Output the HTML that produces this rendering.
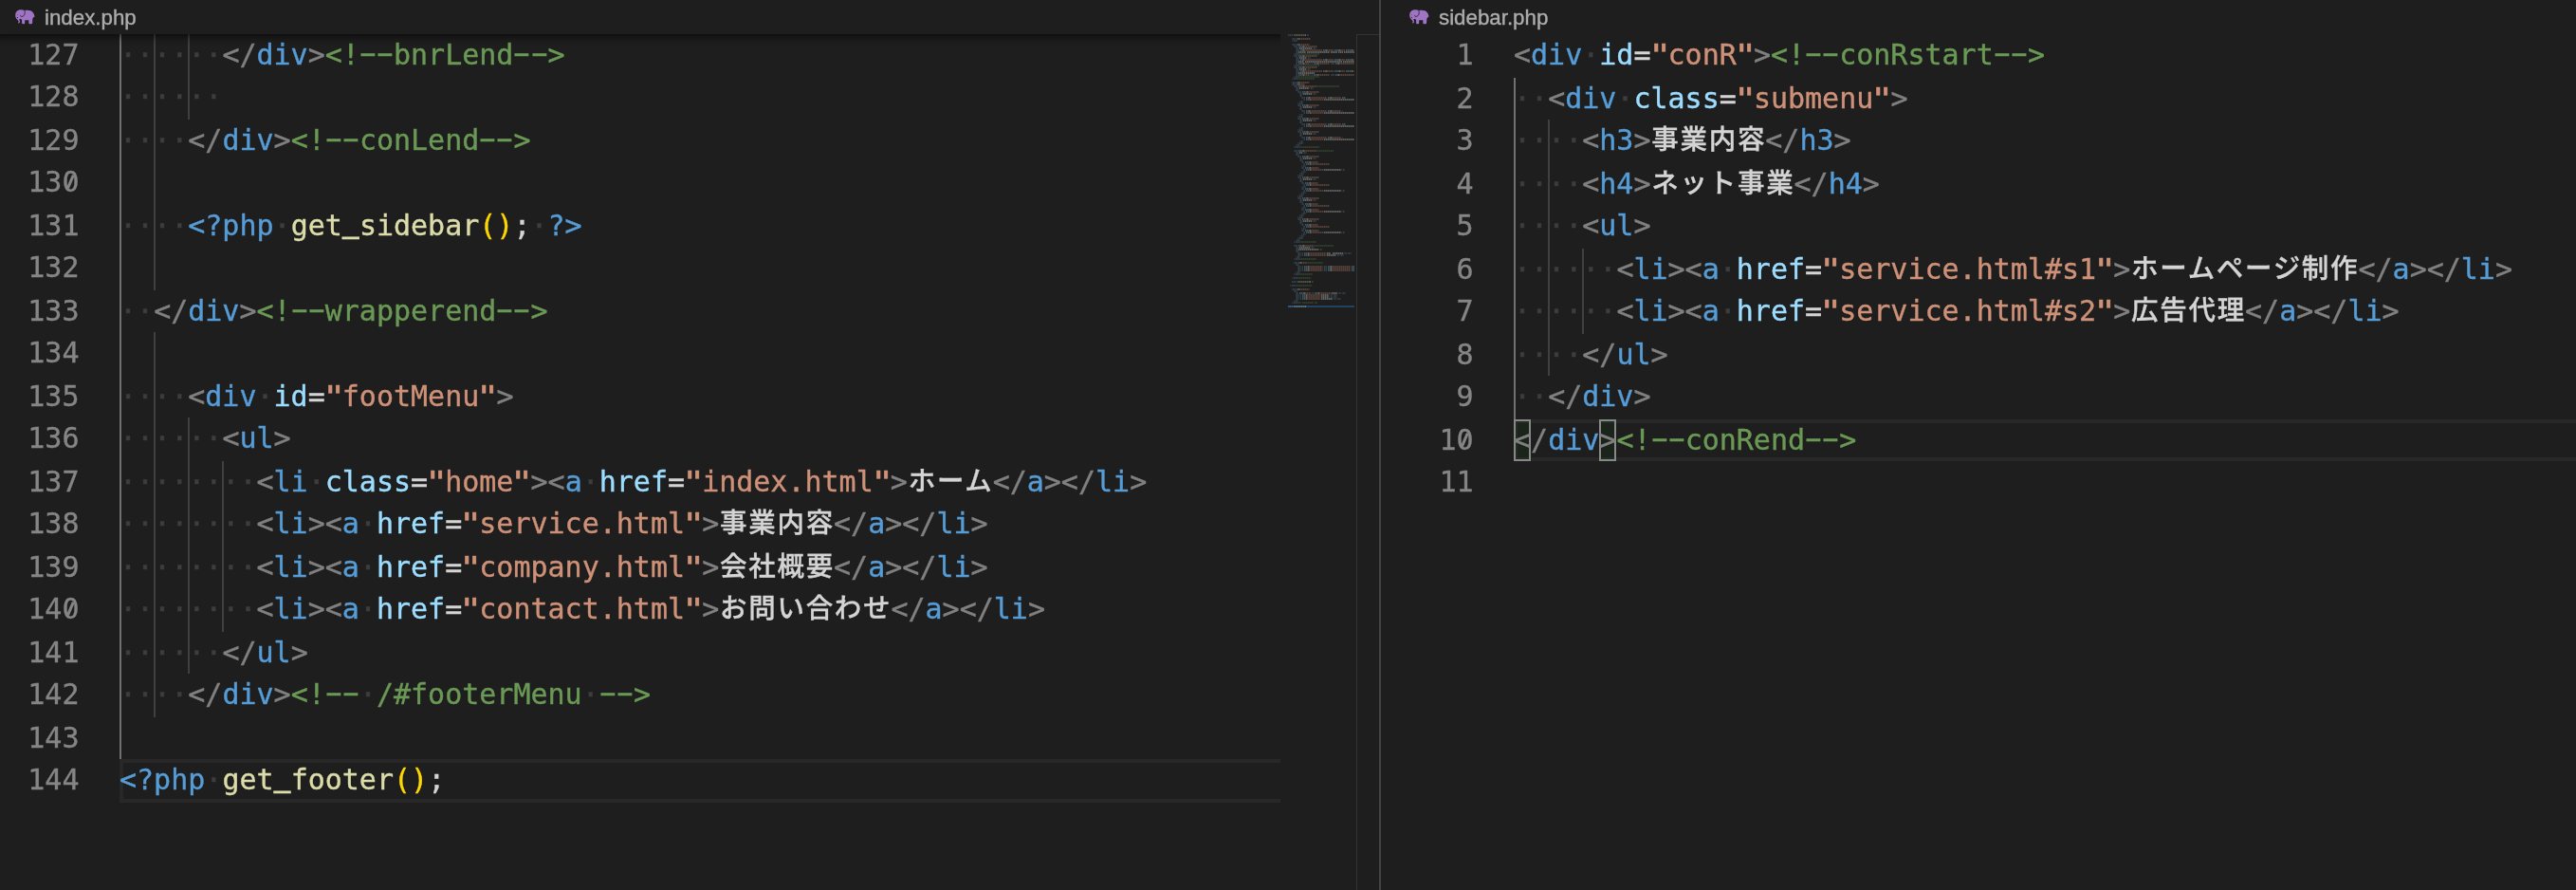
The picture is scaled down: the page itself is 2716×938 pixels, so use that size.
<!DOCTYPE html>
<html lang="ja">
<head>
<meta charset="utf-8">
<title>index.php — sidebar.php</title>
<style>
html,body{margin:0;padding:0;background:#1e1e1e;}
body{width:2716px;height:938px;position:relative;overflow:hidden;font-family:"DejaVu Sans Mono","Liberation Mono","Noto Sans CJK JP",monospace;}
.tab{position:absolute;top:0;height:36px;line-height:38px;font-family:"Liberation Sans","Noto Sans CJK JP",sans-serif;font-size:22.3px;color:#adadad;-webkit-text-stroke:.38px;white-space:pre;}
.tab svg{position:absolute;top:10px;left:0;}
.shadow{position:absolute;left:0;top:36px;width:1350px;height:12px;box-shadow:#000 0 12px 12px -12px inset}
.ln{position:absolute;width:80px;height:45px;line-height:45px;font-size:30px;color:#858585;text-align:right;white-space:pre;}
.cl{position:absolute;height:45px;line-height:45px;font-size:30px;color:#d4d4d4;white-space:pre;}
.cl span{display:inline-block;height:45px;vertical-align:top;}
.cl i{display:inline-block;font-style:normal;transform:translateY(-1.5px) scale(1.85,1.08);}
.cl span.w{-webkit-text-stroke:.6px;color:#3d3d3d}
.cl b{display:inline-block;font-weight:inherit;transform:scaleX(1.4)}
.cl u{display:inline-block;text-decoration:none;transform:scaleY(1.75);transform-origin:50% 100%}
.ln,.cl{-webkit-text-stroke:.38px;margin-top:-1px}
#all{position:absolute;left:0;top:0;width:2716px;height:938px;will-change:transform}
.w{color:#404040}.b{color:#808080}.t{color:#569cd6}.a{color:#9cdcfe}.s{color:#ce9178}.c{color:#6a9955}.d{color:#d4d4d4}.f{color:#dcdcaa}.y{color:#ffd700}
.cl span.j{color:#d4d4d4;font-family:"Noto Sans CJK JP",sans-serif;font-size:28.5px;letter-spacing:1.7px;font-weight:500;position:relative;left:.85px;top:-3px;-webkit-text-stroke:.3px}
.z{position:relative;display:inline-block}
.z::before{content:"";position:absolute;left:50%;top:50%;width:7px;height:8px;margin:-4.500px 0 0 -3.500px;background:#1e1e1e;border-radius:50%}
.z::after{content:"";position:absolute;left:50%;top:50%;width:3px;height:14.500px;margin:-7.750px 0 0 -1.500px;background:#858585;transform:rotate(23deg)}
.ig{position:absolute;width:2px;background:#404040}
.ig.act{background:#707070}
.cur{position:absolute;height:37px;border:4px solid #282828;border-right:0}
.bm{position:absolute;width:14px;height:41px;border:2px solid #888;background:rgba(0,100,0,.1)}
.vline{position:absolute;top:0;width:2px;}
</style>
</head>
<body>
<div id="all">
<div class="vline" style="left:1454px;height:938px;background:#444"></div>
<div class="vline" style="left:1430px;top:36px;height:902px;background:#333;width:1px"></div>
<div style="position:absolute;left:1430px;top:36px;width:24px;height:1px;background:#333"></div>
<div class="tab" style="left:16px;padding-left:31px"><svg width="22" height="16" viewBox="0 0 22 16"><path fill="#a074c4" d="M6.100,0.200C3,0.100 0.200,2.200 0.200,6C0.200,8 0.800,9.200 2,10.600C2.800,11.500 3.800,12 3.600,12.800C3.500,13.300 2.900,13.500 3.200,14.200C3.600,14.800 4.600,14.500 4.900,13.600C5.200,12.500 4.600,11.500 4.400,10.300L5.200,9.800C6,10.200 6.800,10.500 7.100,11L7.100,14.300C7.100,15.200 7.600,15.200 8.600,15.200C9.700,15.200 10.200,15.200 10.200,14.300L10.200,11.200L14.300,11.200L14.300,14.300C14.300,15.200 14.800,15.200 16.200,15.200C17.600,15.200 18.100,15.200 18.100,14.300L18.300,10C18.600,9 19.500,8.300 20.200,7.600L20.900,7.400L20.300,6.800C20,4.500 18.500,2.200 16.500,1.300C14.500,0.500 12,0.600 10.300,0.900C9,0.500 7.500,0.200 6.100,0.200Z"/><path fill="none" stroke="#1e1e1e" stroke-opacity=".9" stroke-width=".85" stroke-linecap="round" d="M9.900,1C10.300,2.500 10.400,4 10,5C9.500,6.500 8.300,7.400 7,7.500C6.200,7.500 5.700,7 5.600,6.300"/><circle cx="2.500" cy="5.500" r=".4" fill="#1e1e1e" fill-opacity=".7"/><circle cx="2.500" cy="8.500" r=".55" fill="#1e1e1e"/></svg>index.php</div>
<div class="tab" style="left:1486px;padding-left:31px"><svg width="22" height="16" viewBox="0 0 22 16"><path fill="#a074c4" d="M6.100,0.200C3,0.100 0.200,2.200 0.200,6C0.200,8 0.800,9.200 2,10.600C2.800,11.500 3.800,12 3.600,12.800C3.500,13.300 2.900,13.500 3.200,14.200C3.600,14.800 4.600,14.500 4.900,13.600C5.200,12.500 4.600,11.500 4.400,10.300L5.200,9.800C6,10.200 6.800,10.500 7.100,11L7.100,14.300C7.100,15.200 7.600,15.200 8.600,15.200C9.700,15.200 10.200,15.200 10.200,14.300L10.200,11.200L14.300,11.200L14.300,14.300C14.300,15.200 14.800,15.200 16.200,15.200C17.600,15.200 18.100,15.200 18.100,14.300L18.300,10C18.600,9 19.500,8.300 20.200,7.600L20.900,7.400L20.300,6.800C20,4.500 18.500,2.200 16.500,1.300C14.500,0.500 12,0.600 10.300,0.900C9,0.500 7.500,0.200 6.100,0.200Z"/><path fill="none" stroke="#1e1e1e" stroke-opacity=".9" stroke-width=".85" stroke-linecap="round" d="M9.900,1C10.300,2.500 10.400,4 10,5C9.500,6.500 8.300,7.400 7,7.500C6.200,7.500 5.700,7 5.600,6.300"/><circle cx="2.500" cy="5.500" r=".4" fill="#1e1e1e" fill-opacity=".7"/><circle cx="2.500" cy="8.500" r=".55" fill="#1e1e1e"/></svg>sidebar.php</div>
<div class="cur" style="left:126px;top:800px;width:1220px;height:38px"></div>
<div class="cur" style="left:1596px;top:442px;width:1116px;height:36px"></div>
<div class="bm" style="left:1596px;top:442px;height:40px"></div>
<div class="bm" style="left:1686px;top:442px;height:40px"></div>
<div class="ig act" style="left:126px;top:36px;height:764px"></div>
<div class="ig" style="left:162px;top:36px;height:270px"></div>
<div class="ig" style="left:162px;top:350px;height:406px"></div>
<div class="ig" style="left:198px;top:36px;height:90px"></div>
<div class="ig" style="left:198px;top:440px;height:270px"></div>
<div class="ig" style="left:234px;top:486px;height:180px"></div>
<div class="ig act" style="left:1596px;top:82px;height:360px"></div>
<div class="ig" style="left:1632px;top:126px;height:270px"></div>
<div class="ig" style="left:1668px;top:262px;height:90px"></div>
<div class="ln" style="top:36px;left:3.5px">127</div>
<div class="cl" style="top:36px;left:126px"><span class="w">······</span><span class="b">&lt;/</span><span class="t">div</span><span class="b">&gt;</span><span class="c">&lt;!<i>-</i><i>-</i>bnrLend<i>-</i><i>-</i>&gt;</span></div>
<div class="ln" style="top:80px;left:3.5px">128</div>
<div class="cl" style="top:80px;left:126px"><span class="w">······</span></div>
<div class="ln" style="top:126px;left:3.5px">129</div>
<div class="cl" style="top:126px;left:126px"><span class="w">····</span><span class="b">&lt;/</span><span class="t">div</span><span class="b">&gt;</span><span class="c">&lt;!<i>-</i><i>-</i>conLend<i>-</i><i>-</i>&gt;</span></div>
<div class="ln" style="top:170px;left:3.5px">13<span class="z">0</span></div>
<div class="cl" style="top:170px;left:126px"></div>
<div class="ln" style="top:216px;left:3.5px">131</div>
<div class="cl" style="top:216px;left:126px"><span class="w">····</span><span class="t">&lt;?php</span><span class="w">·</span><span class="f">get<u>_</u>sidebar</span><span class="y">()</span><span class="d">;</span><span class="w">·</span><span class="t">?&gt;</span></div>
<div class="ln" style="top:260px;left:3.5px">132</div>
<div class="cl" style="top:260px;left:126px"></div>
<div class="ln" style="top:306px;left:3.5px">133</div>
<div class="cl" style="top:306px;left:126px"><span class="w">··</span><span class="b">&lt;/</span><span class="t">div</span><span class="b">&gt;</span><span class="c">&lt;!<i>-</i><i>-</i>wrapperend<i>-</i><i>-</i>&gt;</span></div>
<div class="ln" style="top:350px;left:3.5px">134</div>
<div class="cl" style="top:350px;left:126px"></div>
<div class="ln" style="top:396px;left:3.5px">135</div>
<div class="cl" style="top:396px;left:126px"><span class="w">····</span><span class="b">&lt;</span><span class="t">div</span><span class="w">·</span><span class="a">id</span><span class="d">=</span><span class="s"><b>"</b>footMenu<b>"</b></span><span class="b">&gt;</span></div>
<div class="ln" style="top:440px;left:3.5px">136</div>
<div class="cl" style="top:440px;left:126px"><span class="w">······</span><span class="b">&lt;</span><span class="t">ul</span><span class="b">&gt;</span></div>
<div class="ln" style="top:486px;left:3.5px">137</div>
<div class="cl" style="top:486px;left:126px"><span class="w">········</span><span class="b">&lt;</span><span class="t">li</span><span class="w">·</span><span class="a">class</span><span class="d">=</span><span class="s"><b>"</b>home<b>"</b></span><span class="b">&gt;&lt;</span><span class="t">a</span><span class="w">·</span><span class="a">href</span><span class="d">=</span><span class="s"><b>"</b>index.html<b>"</b></span><span class="b">&gt;</span><span class="j">ホーム</span><span class="b">&lt;/</span><span class="t">a</span><span class="b">&gt;&lt;/</span><span class="t">li</span><span class="b">&gt;</span></div>
<div class="ln" style="top:530px;left:3.5px">138</div>
<div class="cl" style="top:530px;left:126px"><span class="w">········</span><span class="b">&lt;</span><span class="t">li</span><span class="b">&gt;&lt;</span><span class="t">a</span><span class="w">·</span><span class="a">href</span><span class="d">=</span><span class="s"><b>"</b>service.html<b>"</b></span><span class="b">&gt;</span><span class="j">事業内容</span><span class="b">&lt;/</span><span class="t">a</span><span class="b">&gt;&lt;/</span><span class="t">li</span><span class="b">&gt;</span></div>
<div class="ln" style="top:576px;left:3.5px">139</div>
<div class="cl" style="top:576px;left:126px"><span class="w">········</span><span class="b">&lt;</span><span class="t">li</span><span class="b">&gt;&lt;</span><span class="t">a</span><span class="w">·</span><span class="a">href</span><span class="d">=</span><span class="s"><b>"</b>company.html<b>"</b></span><span class="b">&gt;</span><span class="j">会社概要</span><span class="b">&lt;/</span><span class="t">a</span><span class="b">&gt;&lt;/</span><span class="t">li</span><span class="b">&gt;</span></div>
<div class="ln" style="top:620px;left:3.5px">14<span class="z">0</span></div>
<div class="cl" style="top:620px;left:126px"><span class="w">········</span><span class="b">&lt;</span><span class="t">li</span><span class="b">&gt;&lt;</span><span class="t">a</span><span class="w">·</span><span class="a">href</span><span class="d">=</span><span class="s"><b>"</b>contact.html<b>"</b></span><span class="b">&gt;</span><span class="j">お問い合わせ</span><span class="b">&lt;/</span><span class="t">a</span><span class="b">&gt;&lt;/</span><span class="t">li</span><span class="b">&gt;</span></div>
<div class="ln" style="top:666px;left:3.5px">141</div>
<div class="cl" style="top:666px;left:126px"><span class="w">······</span><span class="b">&lt;/</span><span class="t">ul</span><span class="b">&gt;</span></div>
<div class="ln" style="top:710px;left:3.5px">142</div>
<div class="cl" style="top:710px;left:126px"><span class="w">····</span><span class="b">&lt;/</span><span class="t">div</span><span class="b">&gt;</span><span class="c">&lt;!<i>-</i><i>-</i></span><span class="w">·</span><span class="c">/#footerMenu</span><span class="w">·</span><span class="c"><i>-</i><i>-</i>&gt;</span></div>
<div class="ln" style="top:756px;left:3.5px">143</div>
<div class="cl" style="top:756px;left:126px"></div>
<div class="ln" style="top:800px;left:3.5px">144</div>
<div class="cl" style="top:800px;left:126px"><span class="t">&lt;?php</span><span class="w">·</span><span class="f">get<u>_</u>footer</span><span class="y">()</span><span class="d">;</span></div>
<div class="ln" style="top:36px;left:1473.5px">1</div>
<div class="cl" style="top:36px;left:1596px"><span class="b">&lt;</span><span class="t">div</span><span class="w">·</span><span class="a">id</span><span class="d">=</span><span class="s"><b>"</b>conR<b>"</b></span><span class="b">&gt;</span><span class="c">&lt;!<i>-</i><i>-</i>conRstart<i>-</i><i>-</i>&gt;</span></div>
<div class="ln" style="top:82px;left:1473.5px">2</div>
<div class="cl" style="top:82px;left:1596px"><span class="w">··</span><span class="b">&lt;</span><span class="t">div</span><span class="w">·</span><span class="a">class</span><span class="d">=</span><span class="s"><b>"</b>submenu<b>"</b></span><span class="b">&gt;</span></div>
<div class="ln" style="top:126px;left:1473.5px">3</div>
<div class="cl" style="top:126px;left:1596px"><span class="w">····</span><span class="b">&lt;</span><span class="t">h3</span><span class="b">&gt;</span><span class="j">事業内容</span><span class="b">&lt;/</span><span class="t">h3</span><span class="b">&gt;</span></div>
<div class="ln" style="top:172px;left:1473.5px">4</div>
<div class="cl" style="top:172px;left:1596px"><span class="w">····</span><span class="b">&lt;</span><span class="t">h4</span><span class="b">&gt;</span><span class="j">ネット事業</span><span class="b">&lt;/</span><span class="t">h4</span><span class="b">&gt;</span></div>
<div class="ln" style="top:216px;left:1473.5px">5</div>
<div class="cl" style="top:216px;left:1596px"><span class="w">····</span><span class="b">&lt;</span><span class="t">ul</span><span class="b">&gt;</span></div>
<div class="ln" style="top:262px;left:1473.5px">6</div>
<div class="cl" style="top:262px;left:1596px"><span class="w">······</span><span class="b">&lt;</span><span class="t">li</span><span class="b">&gt;&lt;</span><span class="t">a</span><span class="w">·</span><span class="a">href</span><span class="d">=</span><span class="s"><b>"</b>service.html#s1<b>"</b></span><span class="b">&gt;</span><span class="j">ホームページ制作</span><span class="b">&lt;/</span><span class="t">a</span><span class="b">&gt;&lt;/</span><span class="t">li</span><span class="b">&gt;</span></div>
<div class="ln" style="top:306px;left:1473.5px">7</div>
<div class="cl" style="top:306px;left:1596px"><span class="w">······</span><span class="b">&lt;</span><span class="t">li</span><span class="b">&gt;&lt;</span><span class="t">a</span><span class="w">·</span><span class="a">href</span><span class="d">=</span><span class="s"><b>"</b>service.html#s2<b>"</b></span><span class="b">&gt;</span><span class="j">広告代理</span><span class="b">&lt;/</span><span class="t">a</span><span class="b">&gt;&lt;/</span><span class="t">li</span><span class="b">&gt;</span></div>
<div class="ln" style="top:352px;left:1473.5px">8</div>
<div class="cl" style="top:352px;left:1596px"><span class="w">····</span><span class="b">&lt;/</span><span class="t">ul</span><span class="b">&gt;</span></div>
<div class="ln" style="top:396px;left:1473.5px">9</div>
<div class="cl" style="top:396px;left:1596px"><span class="w">··</span><span class="b">&lt;/</span><span class="t">div</span><span class="b">&gt;</span></div>
<div class="ln" style="top:442px;left:1473.5px">1<span class="z">0</span></div>
<div class="cl" style="top:442px;left:1596px"><span class="b">&lt;/</span><span class="t">div</span><span class="b">&gt;</span><span class="c">&lt;!<i>-</i><i>-</i>conRend<i>-</i><i>-</i>&gt;</span></div>
<div class="ln" style="top:486px;left:1473.5px">11</div>
<div class="cl" style="top:486px;left:1596px"></div>
<svg class="mm" width="72" height="290" viewBox="0 0 72 290" style="position:absolute;left:1358px;top:36px"><rect x="0" y="286" width="70" height="2" fill="#264f78" fill-opacity=".75"/><g fill="none" stroke-width="1.2" stroke-dasharray="1.6 .4"><path stroke="#808080" stroke-opacity=".35" d="M4 5h1M23 5h1M4 7h2M9 7h1M4 11h1M22 11h1M6 13h1M30 13h1M8 15h1M11 15h1M25 15h2M29 15h1M8 17h1M8 19h1M10 19h1M6 21h2M11 21h1M6 23h1M30 23h1M8 25h1M11 25h1M19 25h2M23 25h1M8 27h1M8 29h1M10 29h1M8 31h1M23 31h2M43 31h1M45 31h1M6 33h2M11 33h1M6 35h1M30 35h1M8 37h1M11 37h1M19 37h2M23 37h1M8 39h1M8 41h1M10 41h1M8 43h1M23 43h2M43 43h1M45 43h1M6 45h2M11 45h1M4 47h2M9 47h1M4 51h1M22 51h1M4 53h1M17 53h1M6 55h1M30 55h1M8 57h1M11 57h1M22 57h2M26 57h1M8 59h1M11 59h1M10 61h1M32 61h1M12 63h1M15 63h1M25 63h2M29 63h1M12 65h1M14 65h1M14 67h1M60 67h1M16 69h1M37 69h1M12 71h2M15 71h1M10 73h2M15 73h1M10 75h1M32 75h1M12 77h1M15 77h1M25 77h2M29 77h1M12 79h1M14 79h1M14 81h1M57 81h1M16 83h1M37 83h1M12 85h2M15 85h1M10 87h2M15 87h1M10 89h1M32 89h1M12 91h1M15 91h1M25 91h2M29 91h1M12 93h1M14 93h1M14 95h1M60 95h1M16 97h1M37 97h1M12 99h2M15 99h1M10 101h2M15 101h1M10 103h1M32 103h1M12 105h1M15 105h1M25 105h2M29 105h1M12 107h1M14 107h1M14 109h1M57 109h1M16 111h1M37 111h1M12 113h2M15 113h1M10 115h2M15 115h1M8 117h2M12 117h1M6 119h2M11 119h1M6 123h1M30 123h1M8 125h1M11 125h1M15 125h2M19 125h1M8 127h1M11 127h1M10 129h1M32 129h1M12 131h1M15 131h1M25 131h2M29 131h1M12 133h1M15 133h1M14 135h1M31 135h1M16 137h1M43 137h1M14 139h2M18 139h1M14 141h1M32 141h1M16 143h1M37 143h1M56 143h2M59 143h1M14 145h2M18 145h1M12 147h2M16 147h1M10 149h2M15 149h1M10 151h1M32 151h1M12 153h1M15 153h1M25 153h2M29 153h1M12 155h1M15 155h1M14 157h1M31 157h1M16 159h1M43 159h1M14 161h2M18 161h1M14 163h1M32 163h1M16 165h1M37 165h1M56 165h2M59 165h1M14 167h2M18 167h1M12 169h2M16 169h1M10 171h2M15 171h1M10 173h1M32 173h1M12 175h1M15 175h1M25 175h2M29 175h1M12 177h1M15 177h1M14 179h1M31 179h1M16 181h1M43 181h1M14 183h2M18 183h1M14 185h1M32 185h1M16 187h1M37 187h1M56 187h2M59 187h1M14 189h2M18 189h1M12 191h2M16 191h1M10 193h2M15 193h1M10 195h1M32 195h1M12 197h1M15 197h1M25 197h2M29 197h1M12 199h1M15 199h1M14 201h1M31 201h1M16 203h1M43 203h1M14 205h2M18 205h1M14 207h1M32 207h1M16 209h1M37 209h1M56 209h2M59 209h1M14 211h2M18 211h1M12 213h2M16 213h1M10 215h2M15 215h1M8 217h2M12 217h1M6 219h2M11 219h1M6 223h1M27 223h1M8 225h1M11 225h1M23 225h2M27 225h1M8 227h1M10 227h1M32 227h2M35 227h1M8 229h1M11 229h1M10 231h1M13 231h2M40 231h1M58 231h2M61 231h3M66 231h1M10 233h1M13 233h2M40 233h1M50 233h2M53 233h3M58 233h1M8 235h2M12 235h1M6 237h2M11 237h1M6 241h1M20 241h1M8 243h1M11 243h1M10 245h1M13 245h2M36 245h2M10 247h1M13 247h2M36 247h2M10 249h1M13 249h2M36 249h2M8 251h2M12 251h1M6 253h2M11 253h1M4 257h2M9 257h1M2 265h2M7 265h1M4 269h1M22 269h1M6 271h1M9 271h1M8 273h1M24 273h2M45 273h1M52 273h2M55 273h3M60 273h1M8 275h1M11 275h2M34 275h1M43 275h2M46 275h3M51 275h1M8 277h1M11 277h2M34 277h1M43 277h2M46 277h3M51 277h1M8 279h1M11 279h2M34 279h1M47 279h2M50 279h3M55 279h1M6 281h2M10 281h1M4 283h2M9 283h1"/><path stroke="#569cd6" stroke-opacity=".55" d="M0 1h5M20 1h2M5 5h3M6 7h3M5 11h3M7 13h3M9 15h2M27 15h2M9 17h3M9 19h1M8 21h3M7 23h3M9 25h2M21 25h2M9 27h3M9 29h1M9 31h1M25 31h1M46 31h3M8 33h3M7 35h3M9 37h2M21 37h2M9 39h3M9 41h1M9 43h1M25 43h1M46 43h3M8 45h3M6 47h3M5 51h3M5 53h3M7 55h3M9 57h2M24 57h2M9 59h2M11 61h3M13 63h2M27 63h2M13 65h1M15 67h3M17 69h1M14 71h1M12 73h3M11 75h3M13 77h2M27 77h2M13 79h1M15 81h3M17 83h1M14 85h1M12 87h3M11 89h3M13 91h2M27 91h2M13 93h1M15 95h3M17 97h1M14 99h1M12 101h3M11 103h3M13 105h2M27 105h2M13 107h1M15 109h3M17 111h1M14 113h1M12 115h3M10 117h2M8 119h3M7 123h3M9 125h2M17 125h2M9 127h2M11 129h3M13 131h2M27 131h2M13 133h2M15 135h2M17 137h1M16 139h2M15 141h2M17 143h1M58 143h1M16 145h2M14 147h2M12 149h3M11 151h3M13 153h2M27 153h2M13 155h2M15 157h2M17 159h1M16 161h2M15 163h2M17 165h1M58 165h1M16 167h2M14 169h2M12 171h3M11 173h3M13 175h2M27 175h2M13 177h2M15 179h2M17 181h1M16 183h2M15 185h2M17 187h1M58 187h1M16 189h2M14 191h2M12 193h3M11 195h3M13 197h2M27 197h2M13 199h2M15 201h2M17 203h1M16 205h2M15 207h2M17 209h1M58 209h1M16 211h2M14 213h2M12 215h3M10 217h2M8 219h3M7 223h3M9 225h2M25 225h2M9 227h1M34 227h1M9 229h2M11 231h2M15 231h1M60 231h1M64 231h2M11 233h2M15 233h1M52 233h1M56 233h2M10 235h2M8 237h3M7 241h3M9 243h2M11 245h2M15 245h1M38 245h3M11 247h2M15 247h1M38 247h3M11 249h2M15 249h1M38 249h3M10 251h2M8 253h3M6 257h3M4 261h5M25 261h2M4 265h3M5 269h3M7 271h2M9 273h2M26 273h1M54 273h1M58 273h2M9 275h2M13 275h1M45 275h1M49 275h2M9 277h2M13 277h1M45 277h1M49 277h2M9 279h2M13 279h1M49 279h1M53 279h2M8 281h2M6 283h3M0 287h5"/><path stroke="#9cdcfe" stroke-opacity=".55" d="M9 5h2M9 11h2M11 13h5M13 17h3M37 17h3M49 17h5M61 17h6M11 23h5M13 27h3M37 27h3M49 27h5M61 27h6M11 31h5M27 31h4M50 31h3M11 35h5M13 39h3M37 39h3M49 39h5M61 39h6M11 43h5M27 43h4M50 43h3M9 51h2M9 53h2M11 55h5M15 61h5M19 67h3M42 67h3M57 67h3M19 69h4M15 75h5M19 81h3M42 81h3M19 83h4M15 89h5M19 95h3M42 95h3M57 95h3M19 97h4M15 103h5M19 109h3M42 109h3M19 111h4M11 123h5M15 129h5M18 135h5M19 137h4M18 141h5M19 143h4M15 151h5M18 157h5M19 159h4M18 163h5M19 165h4M15 173h5M18 179h5M19 181h4M18 185h5M19 187h4M15 195h5M18 201h5M19 203h4M18 207h5M19 209h4M11 223h5M17 231h4M17 233h4M11 241h2M17 245h4M42 245h3M67 245h3M17 247h4M42 247h3M67 247h3M17 249h4M42 249h3M67 249h3M9 269h2M12 273h5M28 273h4M15 275h4M15 277h4M15 279h4"/><path stroke="#ce9178" stroke-opacity=".58" d="M12 5h11M12 11h10M17 13h13M17 17h19M41 17h7M55 17h5M68 17h2M17 23h13M17 27h19M41 27h7M55 27h5M68 27h2M17 31h6M32 31h11M54 31h16M17 35h13M17 39h19M41 39h7M55 39h5M68 39h2M17 43h6M32 43h11M54 43h16M12 51h10M12 53h5M17 55h13M21 61h11M23 67h18M46 67h10M24 69h13M21 75h11M23 81h18M46 81h10M24 83h13M21 89h11M23 95h18M46 95h10M24 97h13M21 103h11M23 109h18M46 109h10M24 111h13M17 123h13M21 129h11M24 135h7M24 137h19M24 141h8M24 143h13M21 151h11M24 157h7M24 159h19M24 163h8M24 165h13M21 173h11M24 179h7M24 181h19M24 185h8M24 187h13M21 195h11M24 201h7M24 203h19M24 207h8M24 209h13M17 223h10M22 231h18M22 233h18M14 241h6M22 245h14M46 245h20M22 247h14M46 247h20M22 249h14M46 249h20M12 269h10M18 273h6M33 273h12M20 275h14M20 277h14M20 279h14"/><path stroke="#6a9955" stroke-opacity=".50" d="M12 21h21M12 33h21M12 45h21M10 47h18M31 55h23M12 119h21M31 123h17M12 219h18M28 223h20M12 237h18M21 241h16M12 253h14M10 257h14M8 265h17M10 283h4M15 283h12M28 283h3"/><path stroke="#d4d4d4" stroke-opacity=".70" d="M18 1h1M11 5h1M11 11h1M16 13h1M12 15h13M16 17h1M40 17h1M54 17h1M67 17h1M11 19h8M20 19h24M45 19h7M53 19h5M59 19h11M16 23h1M12 25h7M16 27h1M40 27h1M54 27h1M67 27h1M11 29h6M18 29h39M58 29h12M16 31h1M31 31h1M53 31h1M16 35h1M12 37h7M16 39h1M40 39h1M54 39h1M67 39h1M11 41h17M16 43h1M31 43h1M53 43h1M11 51h1M11 53h1M16 55h1M12 57h10M20 61h1M16 63h9M22 67h1M45 67h1M23 69h1M38 69h32M20 75h1M16 77h9M22 81h1M45 81h1M23 83h1M38 83h32M20 89h1M16 91h9M22 95h1M45 95h1M23 97h1M38 97h32M20 103h1M16 105h9M22 109h1M45 109h1M23 111h1M38 111h32M16 123h1M12 125h3M20 129h1M16 131h9M23 135h1M23 137h1M23 141h1M23 143h1M38 143h18M20 151h1M16 153h9M23 157h1M23 159h1M23 163h1M23 165h1M38 165h18M20 173h1M16 175h9M23 179h1M23 181h1M23 185h1M23 187h1M38 187h18M20 195h1M16 197h9M23 201h1M23 203h1M23 207h1M23 209h1M38 209h18M16 223h1M12 225h11M11 227h21M21 231h1M41 231h4M47 231h11M21 233h1M41 233h9M13 241h1M21 245h1M45 245h1M21 247h1M45 247h1M21 249h1M45 249h1M23 261h1M11 269h1M17 273h1M32 273h1M46 273h6M19 275h1M35 275h8M19 277h1M35 277h8M19 279h1M35 279h12M18 287h1"/><path stroke="#dcdcaa" stroke-opacity=".55" d="M6 1h12M10 261h13M6 287h12"/></g></svg>
<div class="shadow"></div>
</div>
</body>
</html>
